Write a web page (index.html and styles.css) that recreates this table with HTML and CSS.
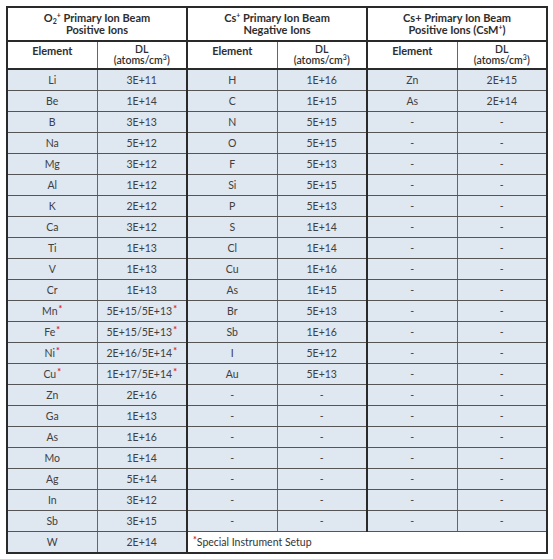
FILE: index.html
```html
<!DOCTYPE html>
<html>
<head>
<meta charset="utf-8">
<link rel="stylesheet" href="styles.css">
</head>
<body>
<table class="dl">
  <colgroup>
    <col class="c"><col class="c"><col class="c"><col class="c"><col class="c"><col class="c">
  </colgroup>
  <thead>
    <tr class="h1">
      <th colspan="2" class="grp">O<sub>2</sub><sup>+</sup> Primary Ion Beam<br>Positive Ions</th>
      <th colspan="2" class="grp">Cs<sup>+</sup> Primary Ion Beam<br>Negative Ions</th>
      <th colspan="2" class="grp">Cs+ Primary Ion Beam<br>Positive Ions (CsM<sup>+</sup>)</th>
    </tr>
    <tr class="h2">
      <th class="gl">Element</th><th class="dlh">DL<br>(atoms/cm<sup>3</sup>)</th>
      <th class="gl">Element</th><th class="dlh">DL<br>(atoms/cm<sup>3</sup>)</th>
      <th class="gl">Element</th><th class="dlh">DL<br>(atoms/cm<sup>3</sup>)</th>
    </tr>
  </thead>
  <tbody>
    <tr><td class="gl">Li</td><td>3E+11</td><td class="gl">H</td><td>1E+16</td><td class="gl">Zn</td><td>2E+15</td></tr>
    <tr><td class="gl">Be</td><td>1E+14</td><td class="gl">C</td><td>1E+15</td><td class="gl">As</td><td>2E+14</td></tr>
    <tr><td class="gl">B</td><td>3E+13</td><td class="gl">N</td><td>5E+15</td><td class="gl">-</td><td>-</td></tr>
    <tr><td class="gl">Na</td><td>5E+12</td><td class="gl">O</td><td>5E+15</td><td class="gl">-</td><td>-</td></tr>
    <tr><td class="gl">Mg</td><td>3E+12</td><td class="gl">F</td><td>5E+13</td><td class="gl">-</td><td>-</td></tr>
    <tr><td class="gl">Al</td><td>1E+12</td><td class="gl">Si</td><td>5E+15</td><td class="gl">-</td><td>-</td></tr>
    <tr><td class="gl">K</td><td>2E+12</td><td class="gl">P</td><td>5E+13</td><td class="gl">-</td><td>-</td></tr>
    <tr><td class="gl">Ca</td><td>3E+12</td><td class="gl">S</td><td>1E+14</td><td class="gl">-</td><td>-</td></tr>
    <tr><td class="gl">Ti</td><td>1E+13</td><td class="gl">Cl</td><td>1E+14</td><td class="gl">-</td><td>-</td></tr>
    <tr><td class="gl">V</td><td>1E+13</td><td class="gl">Cu</td><td>1E+16</td><td class="gl">-</td><td>-</td></tr>
    <tr><td class="gl">Cr</td><td>1E+13</td><td class="gl">As</td><td>1E+15</td><td class="gl">-</td><td>-</td></tr>
    <tr><td class="gl">Mn<sup class="ast">*</sup></td><td>5E+15/5E+13<sup class="ast">*</sup></td><td class="gl">Br</td><td>5E+13</td><td class="gl">-</td><td>-</td></tr>
    <tr><td class="gl">Fe<sup class="ast">*</sup></td><td>5E+15/5E+13<sup class="ast">*</sup></td><td class="gl">Sb</td><td>1E+16</td><td class="gl">-</td><td>-</td></tr>
    <tr><td class="gl">Ni<sup class="ast">*</sup></td><td>2E+16/5E+14<sup class="ast">*</sup></td><td class="gl">I</td><td>5E+12</td><td class="gl">-</td><td>-</td></tr>
    <tr><td class="gl">Cu<sup class="ast">*</sup></td><td>1E+17/5E+14<sup class="ast">*</sup></td><td class="gl">Au</td><td>5E+13</td><td class="gl">-</td><td>-</td></tr>
    <tr><td class="gl">Zn</td><td>2E+16</td><td class="gl">-</td><td>-</td><td class="gl">-</td><td>-</td></tr>
    <tr><td class="gl">Ga</td><td>1E+13</td><td class="gl">-</td><td>-</td><td class="gl">-</td><td>-</td></tr>
    <tr><td class="gl">As</td><td>1E+16</td><td class="gl">-</td><td>-</td><td class="gl">-</td><td>-</td></tr>
    <tr><td class="gl">Mo</td><td>1E+14</td><td class="gl">-</td><td>-</td><td class="gl">-</td><td>-</td></tr>
    <tr><td class="gl">Ag</td><td>5E+14</td><td class="gl">-</td><td>-</td><td class="gl">-</td><td>-</td></tr>
    <tr><td class="gl">In</td><td>3E+12</td><td class="gl">-</td><td>-</td><td class="gl">-</td><td>-</td></tr>
    <tr><td class="gl">Sb</td><td>3E+15</td><td class="gl">-</td><td>-</td><td class="gl">-</td><td>-</td></tr>
    <tr><td class="gl">W</td><td>2E+14</td><td colspan="4" class="gl note"><sup class="ast">*</sup>Special Instrument Setup</td></tr>
  </tbody>
</table>
</body>
</html>
```
FILE: styles.css
```css
html, body {
  margin: 0;
  padding: 0;
  background: #ffffff;
}
body {
  padding: 6px 0 0 6px;
  font-family: "Lato", "Liberation Sans", sans-serif;
}
.dl {
  border-collapse: collapse;
  width: 540px;
  table-layout: fixed;
  border: 2px solid #2a2a2a;
}
.dl col.c {
  width: 90px;
}
.dl th, .dl td {
  padding: 0;
  text-align: center;
  border-top: 1px solid #555;
  border-bottom: 1px solid #555;
  border-left: 1px solid #666;
  border-right: 1px solid #666;
  color: #404040;
}
.dl th {
  background: #ffffff;
  font-weight: 700;
  color: #2e2e2e;
  line-height: 12px;
}
.dl .grp {
  border-left: 2px solid #2a2a2a;
  border-right: 2px solid #2a2a2a;
  border-bottom: 2px solid #2a2a2a;
  font-size: 11px;
  height: 32px;
}
.dl .h2 th {
  font-size: 11px;
  height: 26px;
  border-bottom: 2px solid #2a2a2a;
  vertical-align: middle;
}
.dl .h2 th.gl {
  vertical-align: top;
  padding-top: 3px;
  height: 23px;
}
.dl .h2 .dlh {
  font-weight: 600;
  font-size: 10.5px;
  line-height: 11px;
}
.dl .gl {
  border-left: 2px solid #2a2a2a;
}
.dl td {
  background: #dfe7f1;
  font-size: 10.5px;
  height: 20px;
  line-height: 12px;
}
.dl td.note {
  background: #ffffff;
  text-align: left;
  padding-left: 4px;
  color: #333;
}
sub {
  font-size: 7px;
  vertical-align: -2px;
  line-height: 0;
}
sup {
  font-size: 7px;
  vertical-align: 4px;
  line-height: 0;
}
.ast {
  color: #e0202c;
  font-size: 9px;
  font-weight: 700;
  vertical-align: 3px;
  margin-left: 1px;
}
```
